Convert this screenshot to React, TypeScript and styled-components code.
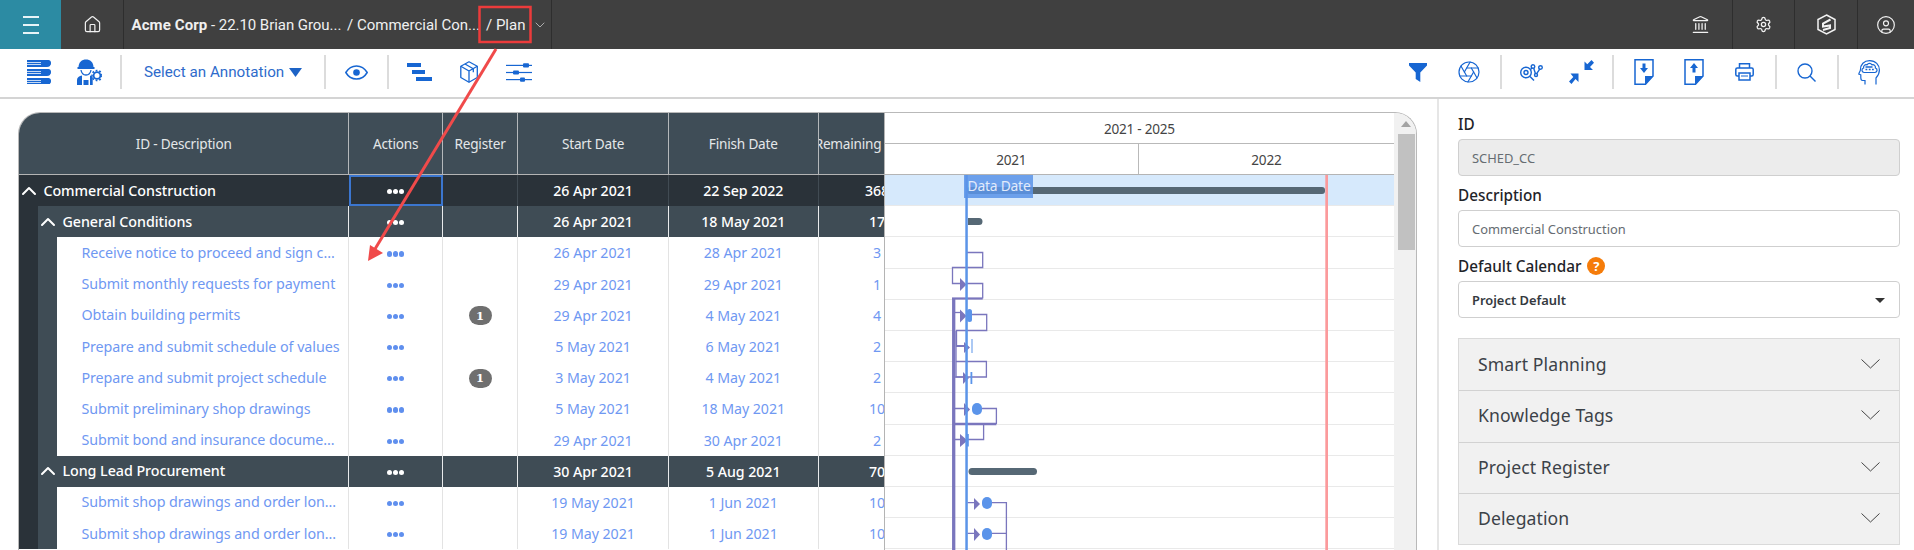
import React from "react";
import styled, { createGlobalStyle } from "styled-components";
import { House, Landmark, Settings, CircleUser, ChevronDown, ChevronUp, Aperture as ApertureIcon } from "lucide-react";

const BODY = `"Noto Sans", "Open Sans", sans-serif`;
const ROBOTO = `Roboto, "Liberation Sans", sans-serif`;
const BLUE = "#1766d2";
const LINK = "#6f98f2";
const DARK = "#2a3239";
const MID = "#3f4c55";
const PURPLE = "#7a76bd";
const COLS = "330.4px 93.4px 75.5px 150.5px 150px 117.6px";

const Global = createGlobalStyle`
  html, body { margin: 0; padding: 0; background: #fff; }
  * { box-sizing: border-box; }
`;

const Page = styled.div`
  position: relative;
  width: 1914px;
  height: 550px;
  overflow: hidden;
  font-family: ${BODY};
  background: #fff;
`;

/* ---------- top bar ---------- */
const TopBar = styled.header`
  display: flex;
  align-items: stretch;
  height: 49px;
  background: #404040;
  color: #f0f0f0;
  font-family: ${ROBOTO};
`;
const MenuCell = styled.div`
  width: 61px;
  background: #2c8ba3;
  display: flex;
  align-items: center;
  justify-content: center;
`;
const BurgerBars = styled.span`
  display: flex;
  flex-direction: column;
  gap: 6px;
  width: 16px;
  & > i { display: block; height: 2px; background: #e8f4f7; }
`;
const HomeCell = styled.div`
  width: 63px;
  border-right: 1px solid #2e2e2e;
  display: flex;
  align-items: center;
  justify-content: center;
`;
const Crumbs = styled.div`
  width: 428px;
  border-right: 1px solid #2e2e2e;
  display: flex;
  align-items: center;
  padding-left: 7.500px;
  font-size: 15px;
  white-space: nowrap;
`;
const CrumbOrg = styled.span`
  width: 215.500px;
  letter-spacing: -0.05px;
  & > b { font-weight: 700; letter-spacing: 0.1px; }
`;
const CrumbPart = styled.span<{ $w: number }>`
  width: ${(p) => p.$w}px;
`;
const TopRight = styled.div`
  margin-left: auto;
  display: flex;
`;
const TopIconCell = styled.div<{ $w: number; $line?: boolean }>`
  width: ${(p) => p.$w}px;
  display: flex;
  align-items: center;
  justify-content: center;
  border-left: ${(p) => (p.$line ? "1px solid #2e2e2e" : "0")};
`;

/* ---------- tool bar ---------- */
const ToolBar = styled.div`
  display: flex;
  align-items: center;
  height: 50px;
  border-bottom: 2px solid #d4d4d4;
  padding: 0 34px 2px 27px;
`;
const Tool = styled.span<{ $gap?: number }>`
  display: inline-flex;
  align-items: center;
  margin-left: ${(p) => p.$gap ?? 0}px;
  flex: none;
`;
const ToolSep = styled.span<{ $gap: number }>`
  width: 2px;
  height: 34px;
  margin-left: ${(p) => p.$gap}px;
  background: #dcdcdc;
  flex: none;
`;
const Annotation = styled.span<{ $gap: number }>`
  margin-left: ${(p) => p.$gap}px;
  font-family: ${ROBOTO};
  font-size: 15.200px;
  color: #2e6bcb;
  width: 138px;
  white-space: nowrap;
  flex: none;
`;
const ToolSpacer = styled.span`
  flex: 1;
`;

/* ---------- main ---------- */
const Main = styled.main`
  display: flex;
  height: 451px;
`;
const Card = styled.section`
  width: 1399px;
  margin: 13px 0 0 18px;
  border: 1px solid #b9b9b9;
  border-bottom: 0;
  border-radius: 22px 22px 0 0;
  overflow: hidden;
  display: flex;
  height: 438px;
`;
const TablePane = styled.div`
  width: 864.800px;
  flex: none;
  overflow: hidden;
`;
const HeadRow = styled.div`
  display: grid;
  grid-template-columns: ${COLS};
  height: 62px;
  background: #3f4d57;
  border-bottom: 1px solid #b4b4b4;
`;
const HeadCell = styled.div`
  display: flex;
  align-items: center;
  justify-content: center;
  font-size: 13.600px;
  letter-spacing: -0.2px;
  color: #e4e7e9;
  white-space: nowrap;
  overflow: hidden;
  border-right: 1px solid #b4b8bb;
`;
const Row = styled.div<{ $level: number }>`
  display: grid;
  grid-template-columns: ${COLS};
  height: 31.2px;
  background: ${(p) => (p.$level === 0 ? DARK : p.$level === 1 ? MID : "#fff")};
  color: ${(p) => (p.$level === 2 ? LINK : "#fff")};
`;
const NameCell = styled.div<{ $level: number }>`
  display: flex;
  align-items: center;
  min-width: 0;
  padding-left: ${(p) => (p.$level === 2 ? 38 : p.$level === 1 ? 19 : 0)}px;
  background: ${(p) =>
    p.$level === 2
      ? `linear-gradient(90deg, ${DARK} 0 19px, ${MID} 19px 38px, #fff 38px)`
      : p.$level === 1
      ? `linear-gradient(90deg, ${DARK} 0 19px, ${MID} 19px)`
      : DARK};
  border-right: 1px solid ${(p) => (p.$level === 2 ? "#e3e3e3" : p.$level === 1 ? "#e8eaeb" : DARK)};
`;
const Expander = styled.span`
  width: 24.400px;
  flex: none;
  display: flex;
  & > svg { margin-left: -1.600px; flex: none; }
`;
const Name = styled.span<{ $level: number }>`
  font-size: 14.300px;
  letter-spacing: -0.05px;
  line-height: 20px;
  white-space: nowrap;
  overflow: hidden;
  text-overflow: ellipsis;
  padding: 0 6px 0 ${(p) => (p.$level === 2 ? 24.4 : 0)}px;
  font-weight: ${(p) => (p.$level === 2 ? 400 : 500)};
`;
const Cell = styled.div<{ $level: number; $focus?: boolean }>`
  display: flex;
  align-items: center;
  justify-content: center;
  font-size: 14.200px;
  letter-spacing: -0.05px;
  white-space: nowrap;
  font-weight: ${(p) => (p.$level === 2 ? 400 : 500)};
  border-right: 1px solid
    ${(p) => (p.$level === 2 ? "#e3e3e3" : p.$level === 1 ? "#e8eaeb" : "#414b53")};
  outline: ${(p) => (p.$focus ? "2px solid #3b76cf" : "none")};
  outline-offset: -2px;
`;
const Dots = styled.span`
  display: flex;
  gap: 0.8px;
  padding-top: 2px;
`;
const Dot = styled.i<{ $light: boolean }>`
  display: block;
  width: 5.2px;
  height: 5.2px;
  border-radius: 50%;
  background: ${(p) => (p.$light ? "#fff" : "#5f8fee")};
`;
const Badge = styled.span`
  width: 23px;
  height: 19px;
  margin-top: 1px;
  border-radius: 10px;
  background: #6f6f6f;
  color: #fff;
  font-family: "DejaVu Serif", serif;
  font-weight: 700;
  font-size: 11.500px;
  display: flex;
  align-items: center;
  justify-content: center;
  letter-spacing: 0;
`;

/* ---------- gantt ---------- */
const GanttPane = styled.div`
  flex: 1;
  min-width: 0;
  border-left: 1px solid #b4b4b4;
  display: flex;
  flex-direction: column;
`;
const ScaleTop = styled.div`
  height: 31px;
  display: flex;
  align-items: center;
  justify-content: center;
  border-bottom: 1px solid #b9b9b9;
  font-size: 13.600px;
  letter-spacing: -0.25px;
  color: #444;
`;
const ScaleBottom = styled.div`
  height: 31px;
  display: grid;
  grid-template-columns: 254px 1fr;
  border-bottom: 1px solid #b4b4b4;
`;
const ScaleYear = styled.div<{ $line?: boolean }>`
  display: flex;
  align-items: center;
  justify-content: center;
  font-size: 13.600px;
  letter-spacing: -0.25px;
  color: #444;
  border-right: ${(p) => (p.$line ? "1px solid #b9b9b9" : "0")};
`;
const GanttBody = styled.div`
  position: relative;
  flex: 1;
`;
const GanttRow = styled.div<{ $selected?: boolean }>`
  height: 31.2px;
  background: ${(p) => (p.$selected ? "#d6e9fc" : "#fff")};
  border-bottom: 1.4px solid #e9e9e9;
`;
const GanttDrawing = styled.svg`
  position: absolute;
  left: 0;
  top: 0;
  width: 510px;
  height: 375px;
`;
const DataDateTag = styled.div`
  position: absolute;
  left: 79.300px;
  top: 0;
  width: 69px;
  height: 23px;
  padding-left: 3.500px;
  background: rgba(91, 148, 232, 0.86);
  color: #e2ebfb;
  font-size: 13.800px;
  letter-spacing: -0.2px;
  line-height: 22px;
  white-space: nowrap;
`;
const ScrollTrack = styled.div`
  width: 22px;
  flex: none;
  background: #f1f1f1;
  display: flex;
  flex-direction: column;
  align-items: center;
  padding: 8px 0 0 2px;
`;
const ScrollUp = styled.span`
  width: 0;
  height: 0;
  border-left: 5px solid transparent;
  border-right: 5px solid transparent;
  border-bottom: 6px solid #a3a3a3;
`;
const ScrollThumb = styled.span`
  width: 17px;
  height: 116px;
  margin-top: 7px;
  background: #c1c1c1;
`;

/* ---------- right panel ---------- */
const Side = styled.aside`
  margin-left: 20px;
  width: 475px;
  border-left: 2px solid #e6e6e6;
  padding: 15px 12px 0 19px;
`;
const Label = styled.div`
  font-size: 15.300px;
  line-height: 20px;
  height: 20px;
  font-weight: 500;
  color: #1f2429;
  display: flex;
  align-items: center;
  gap: 6px;
`;
const Field = styled.div<{ $disabled?: boolean }>`
  height: 37px;
  margin: 5px 0 9px;
  border: 1px solid #cfcfcf;
  border-radius: 4px;
  background: ${(p) => (p.$disabled ? "#ececec" : "#fff")};
  color: #666c72;
  font-size: 12.900px;
  display: flex;
  align-items: center;
  justify-content: space-between;
  padding: 1px 14px 0 13px;
`;
const SelectValue = styled.span`
  color: #343a40;
  font-weight: 600;
`;
const Caret = styled.span`
  width: 0;
  height: 0;
  border-left: 5px solid transparent;
  border-right: 5px solid transparent;
  border-top: 5px solid #333;
`;
const Help = styled.span`
  width: 18px;
  height: 18px;
  border-radius: 50%;
  background: #f57c0a;
  color: #fff;
  font-size: 13px;
  font-weight: 700;
  display: flex;
  align-items: center;
  justify-content: center;
`;
const Accordion = styled.div`
  margin-top: 20px;
  border: 1px solid #dadada;
  background: #f1f1f1;
`;
const AccordionRow = styled.div`
  height: 51.25px;
  display: flex;
  align-items: center;
  justify-content: space-between;
  padding: 0 19px 2px 19px;
  font-size: 17.600px;
  letter-spacing: 0.1px;
  color: #3c4248;
  & + & { border-top: 1px solid #d2d2d2; }
`;

/* ---------- annotation overlay ---------- */
const Overlay = styled.svg`
  position: absolute;
  left: 0;
  top: 0;
  width: 1914px;
  height: 550px;
  pointer-events: none;
`;

/* ---------- icons ---------- */
const Books = () => (
  <svg width="25" height="24" viewBox="0 0 25 24" fill="none">
    {[0, 9, 18].map((y) => (
      <g key={y}>
        <path d={`M0 ${y + 1}H20a2.500 2.500 0 0 1 0 5H0`} stroke={BLUE} strokeWidth="2" />
        <path d={`M14 ${y}H21a3 3 0 0 1 0 6H14Z`} fill={BLUE} />
        <path d={`M0 ${y + 3.500}H14`} stroke={BLUE} strokeWidth="1.500" />
      </g>
    ))}
  </svg>
);
const Worker = () => (
  <svg width="25" height="26" viewBox="0 0 25 26" fill="none">
    <path d="M1.500 8.500C1.500 3 5 .5 9 .5s7.500 2.500 7.500 8Z" fill={BLUE} />
    <rect x=".5" y="8" width="17" height="2" fill={BLUE} />
    <path d="M4 11c.6 3.600 2.600 5 5 5s4.400-1.400 5-5" stroke={BLUE} strokeWidth="1.300" />
    <path d="M0 26v-5c0-2.600 2.200-4 5-4.400v9.400Zm6.500 0v-5h5v5Zm6.500 0v-9.400c1 .2 1.900.5 2.700 1v8.400Z" fill={BLUE} />
    <circle cx="20" cy="16.500" r="3.400" stroke={BLUE} strokeWidth="1.800" />
    <circle cx="20" cy="16.500" r="5" stroke={BLUE} strokeWidth="1.600" strokeDasharray="1.800 1.800" />
  </svg>
);
const Triangle = () => (
  <svg width="13" height="9" viewBox="0 0 13 9">
    <path d="M0 0h13L6.500 9Z" fill="#1d63c6" />
  </svg>
);
const Eye = () => (
  <svg width="23" height="15" viewBox="0 0 23 15" fill="none">
    <path d="M.8 7.500C3.500 3 7 .9 11.500.9S19.500 3 22.200 7.500C19.500 12 16 14.100 11.500 14.100S3.500 12 .8 7.500Z" stroke={BLUE} strokeWidth="1.500" />
    <circle cx="11.500" cy="7.500" r="3.300" fill={BLUE} />
  </svg>
);
const GanttIcon = () => (
  <svg width="25" height="18" viewBox="0 0 25 18" fill={BLUE}>
    <rect x="0" y="0" width="14" height="4" />
    <rect x="5" y="7" width="13" height="4" />
    <rect x="9" y="14" width="16" height="4" />
  </svg>
);
const BoxIcon = () => (
  <svg width="18" height="22" viewBox="0 0 18 22" fill="none" stroke={BLUE} strokeWidth="1.300" strokeLinejoin="round">
    <path d="M9 .8 17.300 5.200V16.500L9 21.200.8 16.500V5.200Z" />
    <path d="M.8 5.200 9 10l8.300-4.800M9 10v11.200M5 3l8.300 4.700v3.500" />
  </svg>
);
const Sliders = () => (
  <svg width="26" height="19" viewBox="0 0 26 19" fill={BLUE}>
    <rect x="0" y="1.800" width="26" height="1.200" />
    <rect x="17" y=".3" width="6" height="4.200" rx="1" />
    <rect x="0" y="8.900" width="26" height="1.200" />
    <rect x="7" y="7.400" width="6" height="4.200" rx="1" />
    <rect x="0" y="16" width="26" height="1.200" />
    <rect x="14" y="14.500" width="5" height="4.200" rx="1" />
  </svg>
);
const Funnel = () => (
  <svg width="18" height="19" viewBox="0 0 18 19" fill={BLUE}>
    <path d="M0 0h18v2.500L11.300 9.500V19L6.700 16V9.500L0 2.500Z" />
  </svg>
);
const Analytics = () => (
  <svg width="23" height="17" viewBox="0 0 23 17" fill="none" stroke={BLUE} strokeWidth="1.400">
    <circle cx="6" cy="8.500" r="5.300" />
    <circle cx="6" cy="8.500" r="2" />
    <path d="m10 12.500 4 4" />
    <circle cx="13" cy="2.500" r="1.800" />
    <circle cx="20.500" cy="3.500" r="1.800" />
    <circle cx="16" cy="11" r="1.500" />
    <path d="m10.500 5.500 1.500-1.500M13.700 4.300l1.700 5.200M16.700 9.700l3-4.500" />
  </svg>
);
const Compress = () => (
  <svg width="25" height="24" viewBox="0 0 25 24" fill={BLUE}>
    <path d="M15.500 1.500V10H24L21 7 25 2.800 22.500 0 18.300 4.300ZM9.500 13.500V22L6.500 19 2.500 24 0 21.500 4.300 17 1.500 13.500Z" />
  </svg>
);
const Doc = ({ up }: { up?: boolean }) => (
  <svg width="20" height="26" viewBox="0 0 20 26" fill="none">
    <path d="M1 .8H19V17L11.500 25.200H1Z" stroke={BLUE} strokeWidth="1.500" />
    <path d="M11 25.500V17H19.500Z" fill={BLUE} />
    <path d={up ? "M10 4 14 9H11.500V13.500H8.500V9H6Z" : "M8.500 4.500H11.500V9H14L10 14 6 9H8.500Z"} fill={BLUE} />
  </svg>
);
const Printer = () => (
  <svg width="19" height="18" viewBox="0 0 19 18" fill="none" stroke={BLUE} strokeWidth="1.500">
    <path d="M4.500 5V.8H14.500V5" />
    <rect x=".8" y="5" width="17.400" height="8" rx="1.500" />
    <rect x="4" y="10" width="11" height="7" fill="#fff" />
    <path d="M6 13h7" strokeWidth="1" />
  </svg>
);
const Search = () => (
  <svg width="19" height="19" viewBox="0 0 19 19" fill="none" stroke={BLUE} strokeWidth="1.400">
    <circle cx="8" cy="8" r="7" />
    <path d="m13 13 5.500 5.500" />
  </svg>
);
const Brain = () => (
  <svg width="22" height="25" viewBox="0 0 22 25" fill="none" stroke={BLUE} strokeWidth="1.200">
    <path d="M7 24.500V20.500H4.500C3 20.500 2.800 19 2.800 17.500V14.800L.8 14C1 12.500 2.300 11.500 2.400 10 2.300 4.500 6 .6 11.700.6 17.600.6 21.400 5 21.400 10c0 4-1.500 6-3.400 8v6.500" />
    <path d="M6 12.500a2.300 2.300 0 0 1-.4-4.500 2.700 2.700 0 0 1 3.400-3.200 3 3 0 0 1 5 0 2.700 2.700 0 0 1 3.400 3.200 2.300 2.300 0 0 1-.4 4.500Z" />
    <path d="M7.500 9.500h1.800M10.800 9.500h1.800M14 9.500h1.800M7.500 7h7" strokeWidth="1.700" />
  </svg>
);
const ShieldS = () => (
  <svg width="19" height="21" viewBox="0 0 19 21" fill="none" stroke="#f2f2f2" strokeWidth="1.500">
    <path d="M9.500 1 18 5.500V15.500L9.500 20 1 15.500V5.500Z" />
    <path d="M13.500 5.500 6 9.500v3l7-1v2.500l-7 2" strokeWidth="2" />
  </svg>
);

/* ---------- data ---------- */
type Item = { level: number; name: string; start: string; finish: string; rem: string; badge?: boolean; focus?: boolean };
const rows: Item[] = [
  { level: 0, name: "Commercial Construction", start: "26 Apr 2021", finish: "22 Sep 2022", rem: "368", focus: true },
  { level: 1, name: "General Conditions", start: "26 Apr 2021", finish: "18 May 2021", rem: "17" },
  { level: 2, name: "Receive notice to proceed and sign contract", start: "26 Apr 2021", finish: "28 Apr 2021", rem: "3" },
  { level: 2, name: "Submit monthly requests for payment", start: "29 Apr 2021", finish: "29 Apr 2021", rem: "1" },
  { level: 2, name: "Obtain building permits", start: "29 Apr 2021", finish: "4 May 2021", rem: "4", badge: true },
  { level: 2, name: "Prepare and submit schedule of values", start: "5 May 2021", finish: "6 May 2021", rem: "2" },
  { level: 2, name: "Prepare and submit project schedule", start: "3 May 2021", finish: "4 May 2021", rem: "2", badge: true },
  { level: 2, name: "Submit preliminary shop drawings", start: "5 May 2021", finish: "18 May 2021", rem: "10" },
  { level: 2, name: "Submit bond and insurance documents", start: "29 Apr 2021", finish: "30 Apr 2021", rem: "2" },
  { level: 1, name: "Long Lead Procurement", start: "30 Apr 2021", finish: "5 Aug 2021", rem: "70" },
  { level: 2, name: "Submit shop drawings and order long lead items", start: "19 May 2021", finish: "1 Jun 2021", rem: "10" },
  { level: 2, name: "Submit shop drawings and order long lead items", start: "19 May 2021", finish: "1 Jun 2021", rem: "10" },
];

const Arrowhead = ({ x, y }: { x: number; y: number }) => (
  <path d={`M${x} ${y - 6.500}L${x + 6.500} ${y}L${x} ${y + 6.500}Z`} fill={PURPLE} />
);

const GanttArt = () => (
  <GanttDrawing viewBox="885 175 510 375">
    {/* summary bars */}
    <rect x="967" y="187" width="358" height="7" rx="3" fill="#566875" />
    <path d="M968 218h11a3.500 3.500 0 0 1 0 7h-11Z" fill="#566875" />
    <rect x="968.500" y="468" width="68.500" height="7" rx="3.500" fill="#566875" />
    {/* dependency lines */}
    <g fill="none" stroke={PURPLE} strokeWidth="1.300">
      <path d="M967 252.500H982.700V267.500H952.500V283.500H960" />
      <path d="M967 283.500H982.700V298.500" />
      <path d="M953 312.500H960" />
      <path d="M972 314.500H986.700V330.500H956.500V346H964" />
      <path d="M956 361.500H986.400V377H956V331" />
      <path d="M955 377H963" />
      <path d="M955 408.500H964M982 408.500H996.400V424" />
      <path d="M983.600 424V439.500H968M953 439.500H960" />
      <path d="M967.500 502.700H974M992 502.700H1006.400V550" />
      <path d="M967.500 533.300H974M992 533.300H1006.400" />
    </g>
    <path d="M952 298.500H982.700" stroke={PURPLE} strokeWidth="2.200" />
    <path d="M953.700 298V550" stroke={PURPLE} strokeWidth="3.300" fill="none" />
    <path d="M953 424H996.400" stroke={PURPLE} strokeWidth="2.400" />
    <path d="M956 346H964" stroke={PURPLE} strokeWidth="2" />
    {/* arrow heads */}
    <Arrowhead x={960} y={284.500} />
    <Arrowhead x={960} y={316} />
    <path d="M964 342L970 347.500L964 353Z" fill={PURPLE} />
    <path d="M963 372L969 378L963 384Z" fill={PURPLE} />
    <path d="M964 403L970 409.500L964 416Z" fill={PURPLE} />
    <path d="M960 434L967.500 440.500L960 447Z" fill={PURPLE} />
    <path d="M974 498L980 504L974 510Z" fill={PURPLE} />
    <path d="M974 528L980 534.500L974 541Z" fill={PURPLE} />
    {/* activities */}
    <rect x="967" y="309" width="5" height="13" rx="2.500" fill="#5b94ea" />
    <rect x="971.500" y="339" width="1" height="14" fill="#5b94ea" />
    <rect x="970.500" y="372" width="1.800" height="12" fill="#5b94ea" />
    <rect x="972" y="403" width="10" height="12" rx="5" fill="#5b94ea" />
    <rect x="967" y="434" width="1.800" height="12.500" fill="#5b94ea" />
    <rect x="982" y="497" width="10" height="12" rx="5" fill="#5b94ea" />
    <rect x="982" y="528" width="10" height="12" rx="5" fill="#5b94ea" />
    {/* date lines */}
    <rect x="965.300" y="175" width="2.500" height="375" fill="#5b94e8" />
    <rect x="1325.300" y="175" width="2.700" height="375" fill="#fb9a9c" />
  </GanttDrawing>
);

export default function App() {
  return (
    <Page>
      <Global />
      <TopBar>
        <MenuCell>
          <BurgerBars>
            <i />
            <i />
            <i />
          </BurgerBars>
        </MenuCell>
        <HomeCell>
          <House size={19} strokeWidth={1.5} color="#f2f2f2" />
        </HomeCell>
        <Crumbs>
          <CrumbOrg>
            <b>Acme Corp</b> - 22.10 Brian Grou...
          </CrumbOrg>
          <CrumbPart $w={139}>/ Commercial Con...</CrumbPart>
          <CrumbPart $w={46}>/ Plan</CrumbPart>
          <ChevronDown size={16} strokeWidth={1} color="#e4e4e4" />
        </Crumbs>
        <TopRight>
          <TopIconCell $w={64}>
            <Landmark size={19} strokeWidth={1.6} color="#f2f2f2" />
          </TopIconCell>
          <TopIconCell $w={62} $line>
            <Settings size={17} strokeWidth={1.8} color="#f2f2f2" />
          </TopIconCell>
          <TopIconCell $w={63} $line>
            <ShieldS />
          </TopIconCell>
          <TopIconCell $w={57} $line>
            <CircleUser size={20} strokeWidth={1.4} color="#f2f2f2" />
          </TopIconCell>
        </TopRight>
      </TopBar>

      <ToolBar>
        <Tool><Books /></Tool>
        <Tool $gap={25}><Worker /></Tool>
        <ToolSep $gap={18} />
        <Annotation $gap={22}>Select an Annotation</Annotation>
        <Tool $gap={7}><Triangle /></Tool>
        <ToolSep $gap={22} />
        <Tool $gap={19}><Eye /></Tool>
        <ToolSep $gap={19} />
        <Tool $gap={18}><GanttIcon /></Tool>
        <Tool $gap={28}><BoxIcon /></Tool>
        <Tool $gap={28}><Sliders /></Tool>
        <ToolSpacer />
        <Tool><Funnel /></Tool>
        <Tool $gap={30}><ApertureIcon size={24} strokeWidth={1.200} color={BLUE} /></Tool>
        <ToolSep $gap={19} />
        <Tool $gap={18}><Analytics /></Tool>
        <Tool $gap={26}><Compress /></Tool>
        <ToolSep $gap={18} />
        <Tool $gap={20}><Doc /></Tool>
        <Tool $gap={30}><Doc up /></Tool>
        <Tool $gap={31}><Printer /></Tool>
        <ToolSep $gap={21} />
        <Tool $gap={20}><Search /></Tool>
        <ToolSep $gap={21} />
        <Tool $gap={19}><Brain /></Tool>
      </ToolBar>

      <Main>
        <Card>
          <TablePane>
            <HeadRow>
              <HeadCell>ID - Description</HeadCell>
              <HeadCell>Actions</HeadCell>
              <HeadCell>Register</HeadCell>
              <HeadCell>Start Date</HeadCell>
              <HeadCell>Finish Date</HeadCell>
              <HeadCell>Remaining Duration</HeadCell>
            </HeadRow>
            {rows.map((r, i) => (
              <Row key={i} $level={r.level}>
                <NameCell $level={r.level}>
                  {r.level < 2 && (
                    <Expander>
                      <ChevronUp size={24} strokeWidth={2} color="#fff" />
                    </Expander>
                  )}
                  <Name $level={r.level}>{r.name}</Name>
                </NameCell>
                <Cell $level={r.level} $focus={r.focus}>
                  <Dots>
                    <Dot $light={r.level < 2} />
                    <Dot $light={r.level < 2} />
                    <Dot $light={r.level < 2} />
                  </Dots>
                </Cell>
                <Cell $level={r.level}>{r.badge && <Badge>1</Badge>}</Cell>
                <Cell $level={r.level}>{r.start}</Cell>
                <Cell $level={r.level}>{r.finish}</Cell>
                <Cell $level={r.level}>{r.rem}</Cell>
              </Row>
            ))}
          </TablePane>
          <GanttPane>
            <ScaleTop>2021 - 2025</ScaleTop>
            <ScaleBottom>
              <ScaleYear $line>2021</ScaleYear>
              <ScaleYear>2022</ScaleYear>
            </ScaleBottom>
            <GanttBody>
              {rows.map((r, i) => (
                <GanttRow key={i} $selected={i === 0} />
              ))}
              <GanttArt />
              <DataDateTag>Data Date</DataDateTag>
            </GanttBody>
          </GanttPane>
          <ScrollTrack>
            <ScrollUp />
            <ScrollThumb />
          </ScrollTrack>
        </Card>

        <Side>
          <Label>ID</Label>
          <Field $disabled>SCHED_CC</Field>
          <Label>Description</Label>
          <Field>Commercial Construction</Field>
          <Label>
            Default Calendar <Help>?</Help>
          </Label>
          <Field>
            <SelectValue>Project Default</SelectValue>
            <Caret />
          </Field>
          <Accordion>
            {["Smart Planning", "Knowledge Tags", "Project Register", "Delegation"].map((t) => (
              <AccordionRow key={t}>
                {t}
                <svg width="19" height="10" viewBox="0 0 19 10" fill="none" stroke="#444" strokeWidth="1">
                  <path d="M.5.5 9.500 9 18.500.5" />
                </svg>
              </AccordionRow>
            ))}
          </Accordion>
        </Side>
      </Main>

      <Overlay viewBox="0 0 1914 550">
        <rect x="479.500" y="7" width="51" height="35" fill="none" stroke="#ec3b3b" strokeWidth="2.500" />
        <path d="M496 49 L375 249" stroke="#f04a4a" strokeWidth="3" fill="none" />
        <path d="M368 261 L370 245 L383 253 Z" fill="#f04a4a" />
      </Overlay>
    </Page>
  );
}
